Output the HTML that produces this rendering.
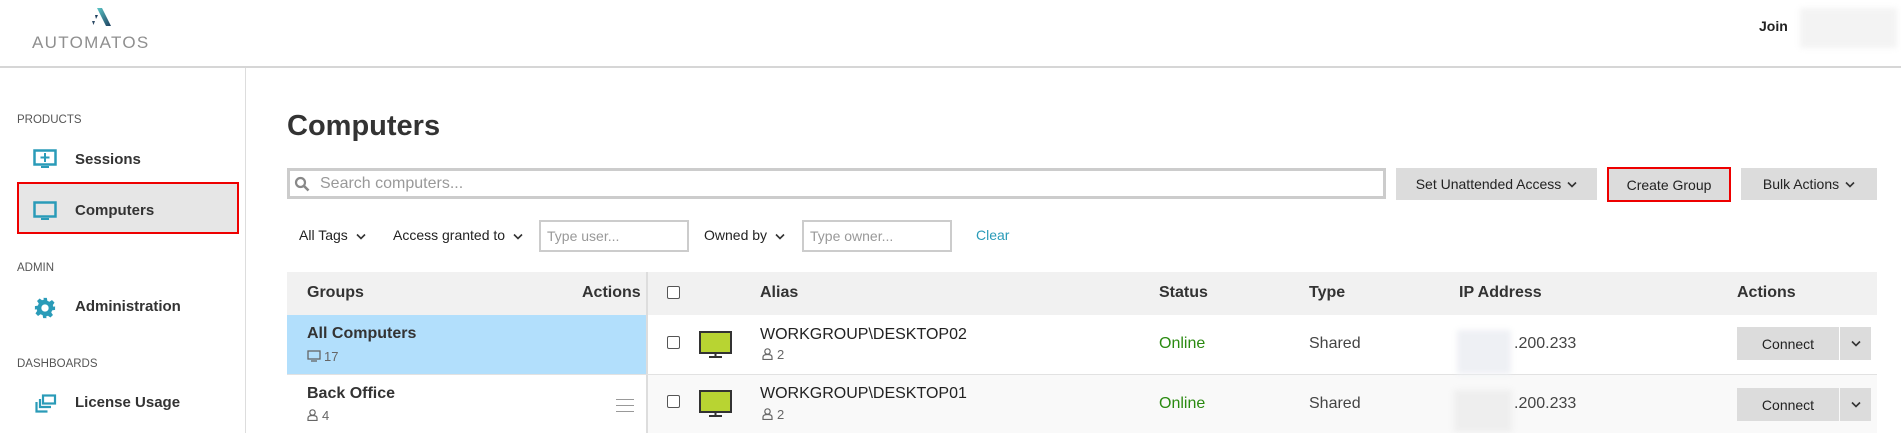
<!DOCTYPE html>
<html><head><meta charset="utf-8"><style>
*{box-sizing:border-box;margin:0;padding:0}
body{width:1901px;height:433px;overflow:hidden;background:#fff;font-family:"Liberation Sans",sans-serif;color:#222;position:relative}
.a{position:absolute;white-space:nowrap}
.btn{position:absolute;background:#dcdcdc;font-size:14px;color:#222;display:flex;align-items:center;justify-content:center}
.sec{font-size:11.5px;color:#555}
.nav{font-size:15px;font-weight:bold;color:#333}
.th{font-size:16px;font-weight:bold;color:#333}
.inp{position:absolute;border:2px solid #ccc;font-size:14px;color:#999;padding-left:6px;display:flex;align-items:center}
.cb{position:absolute;width:13px;height:13px;border:1px solid #555;border-radius:2px;background:#fff}
.chev{display:inline-block;width:10px;height:7px;margin-left:6px;vertical-align:middle}
.pi{display:inline-block;width:11px;height:12px;vertical-align:-1px;margin-right:4px}
</style></head><body>
<svg width="0" height="0" style="position:absolute"><defs>
<symbol id="ch" viewBox="0 0 10 7"><path d="M1 1.5l4 4 4-4" fill="none" stroke="#333" stroke-width="1.6"/></symbol>
<symbol id="pp" viewBox="0 0 11 12"><circle cx="5.5" cy="3.5" r="2.7" fill="none" stroke="#666" stroke-width="1.2"/><path d="M1 11.5v-2.5q0-2.5 4.5-2.5t4.5 2.5v2.5z" fill="none" stroke="#666" stroke-width="1.2"/></symbol>
</defs></svg>
<!-- header -->
<svg class="a" style="left:84px;top:7px" width="32" height="22" viewBox="0 0 32 22"><defs><linearGradient id="g" x1="0" y1="0" x2="1" y2="1"><stop offset="0" stop-color="#5cc8c8"/><stop offset="1" stop-color="#1d3f5e"/></linearGradient></defs><path d="M13 1 L18 1 L27 19 L22 19 L15.5 6 Z" fill="url(#g)"/><path d="M11 8 L14 8 L12 12 Z" fill="#1d3f5e"/><path d="M8 14 L11 14 L9.5 18 Z" fill="#2d4a66"/></svg>
<div class="a" style="left:32px;top:33px;font-size:17px;letter-spacing:1.3px;color:#8f8f8f">AUTOMATOS</div>
<div class="a" style="left:1759px;top:18px;font-size:14px;font-weight:bold;color:#222">Join</div>
<div class="a" style="left:1800px;top:8px;width:97px;height:40px;background:#f3f3f3;filter:blur(3px)"></div>
<div class="a" style="left:0;top:66px;width:1901px;height:2px;background:#d6d6d6"></div>
<!-- sidebar -->
<div class="a" style="left:245px;top:68px;width:1px;height:365px;background:#ddd"></div>
<div class="a sec" style="left:17px;top:114px">PRODUCTS</div>
<svg class="a" style="left:33px;top:149px" width="24" height="20" viewBox="0 0 24 20"><rect x="1.5" y="1.5" width="21" height="14" fill="none" stroke="#2a9bb8" stroke-width="2.5"/><path d="M12 4v9M7.5 8.5h9" stroke="#2a9bb8" stroke-width="2"/><path d="M8 18h8" stroke="#2a9bb8" stroke-width="2"/></svg>
<div class="a nav" style="left:75px;top:151px">Sessions</div>
<div class="a" style="left:17px;top:182px;width:222px;height:52px;background:#e6e6e6;border:2px solid #e00"></div>
<svg class="a" style="left:33px;top:201px" width="24" height="20" viewBox="0 0 24 20"><rect x="1.5" y="1.5" width="21" height="14" fill="none" stroke="#2a9bb8" stroke-width="2.5"/><path d="M8 18h8" stroke="#2a9bb8" stroke-width="2"/></svg>
<div class="a nav" style="left:75px;top:202px">Computers</div>
<div class="a sec" style="left:17px;top:262px">ADMIN</div>
<svg class="a" style="left:34px;top:297px" width="22" height="22" viewBox="0 0 24 24"><path fill="#2a9bb8" d="M10 1h4l.6 3.2 2.3 1 2.7-1.9 2.8 2.8-1.9 2.7 1 2.3L23 10v4l-3.2.6-1 2.3 1.9 2.7-2.8 2.8-2.7-1.9-2.3 1L14 23h-4l-.6-3.2-2.3-1-2.7 1.9-2.8-2.8 1.9-2.7-1-2.3L1 14v-4l3.2-.6 1-2.3L3.3 4.4l2.8-2.8 2.7 1.9 2.3-1zM12 8a4 4 0 100 8 4 4 0 000-8z"/></svg>
<div class="a nav" style="left:75px;top:298px">Administration</div>
<div class="a sec" style="left:17px;top:358px">DASHBOARDS</div>
<svg class="a" style="left:35px;top:394px" width="22" height="19" viewBox="0 0 22 19"><rect x="8" y="1.5" width="12" height="8" fill="none" stroke="#2a9bb8" stroke-width="2.2"/><path d="M5 5v8h11M1.5 8v9.5h11" fill="none" stroke="#2a9bb8" stroke-width="2.2"/></svg>
<div class="a nav" style="left:75px;top:394px">License Usage</div>
<!-- main -->
<div class="a" style="left:287px;top:110px;font-size:29px;font-weight:bold;color:#333">Computers</div>
<div class="inp" style="left:287px;top:168px;width:1099px;height:31px;border-width:3px;font-size:16px;padding-left:30px">Search computers...</div>
<svg class="a" style="left:294px;top:176px" width="16" height="16" viewBox="0 0 16 16"><circle cx="6.5" cy="6.5" r="4.5" fill="none" stroke="#888" stroke-width="2.2"/><path d="M10 10l4.5 4.5" stroke="#888" stroke-width="2.6"/></svg>
<div class="btn" style="left:1396px;top:168px;width:201px;height:32px">Set Unattended Access<svg class="chev"><use href="#ch"/></svg></div>
<div class="btn" style="left:1607px;top:167px;width:124px;height:35px;border:2px solid #e00">Create Group</div>
<div class="btn" style="left:1741px;top:168px;width:136px;height:32px">Bulk Actions<svg class="chev"><use href="#ch"/></svg></div>
<div class="a" style="left:299px;top:227px;font-size:14px;color:#222">All Tags<svg class="chev" style="margin-left:8px"><use href="#ch"/></svg></div>
<div class="a" style="left:393px;top:227px;font-size:14px;color:#222">Access granted to<svg class="chev" style="margin-left:8px"><use href="#ch"/></svg></div>
<div class="inp" style="left:539px;top:220px;width:150px;height:32px">Type user...</div>
<div class="a" style="left:704px;top:227px;font-size:14px;color:#222">Owned by<svg class="chev" style="margin-left:8px"><use href="#ch"/></svg></div>
<div class="inp" style="left:802px;top:220px;width:150px;height:32px">Type owner...</div>
<div class="a" style="left:976px;top:227px;font-size:14px;color:#2a9bb8">Clear</div>
<!-- table -->
<div class="a" style="left:287px;top:272px;width:1590px;height:43px;background:#f1f1f1"></div>
<div class="a" style="left:646px;top:272px;width:2px;height:161px;background:#ddd"></div>
<div class="a th" style="left:307px;top:284px">Groups</div>
<div class="a th" style="left:582px;top:284px">Actions</div>
<div class="cb" style="left:667px;top:286px"></div>
<div class="a th" style="left:760px;top:284px">Alias</div>
<div class="a th" style="left:1159px;top:284px">Status</div>
<div class="a th" style="left:1309px;top:284px">Type</div>
<div class="a th" style="left:1459px;top:284px">IP Address</div>
<div class="a th" style="left:1737px;top:284px">Actions</div>
<div class="a" style="left:287px;top:315px;width:359px;height:59px;background:#b2dffc"></div>
<div class="a" style="left:287px;top:374px;width:1590px;height:1px;background:#e2e2e2"></div>
<div class="a" style="left:648px;top:375px;width:1229px;height:58px;background:#f9f9f9"></div>
<div class="a" style="left:307px;top:325px;font-size:16px;font-weight:bold;color:#333">All Computers</div>
<div class="a" style="left:307px;top:349px;font-size:13px;color:#666"><svg width="14" height="12" viewBox="0 0 14 12" style="vertical-align:-1px;margin-right:3px"><rect x="1" y="1" width="12" height="8" fill="none" stroke="#666" stroke-width="1.3"/><path d="M4 11h6" stroke="#666" stroke-width="1.3"/></svg>17</div>
<div class="a" style="left:307px;top:385px;font-size:16px;font-weight:bold;color:#333">Back Office</div>
<div class="a" style="left:307px;top:408px;font-size:13px;color:#666"><svg class="pi"><use href="#pp"/></svg>4</div>
<div class="a" style="left:616px;top:399px;width:18px;border-top:1px solid #999;border-bottom:1px solid #999;height:13px"></div>
<div class="a" style="left:616px;top:405px;width:18px;height:1px;background:#999"></div>
<!-- rows -->
<div class="cb" style="left:667px;top:336px"></div>
<svg class="a" style="left:699px;top:331px" width="33" height="28" viewBox="0 0 33 28"><rect x="1" y="1" width="31" height="21" fill="#b8d432" stroke="#333" stroke-width="2"/><path d="M16.5 22v3M10 26h13" stroke="#333" stroke-width="2"/></svg>
<div class="a" style="left:760px;top:326px;font-size:16px;color:#222">WORKGROUP\DESKTOP02</div>
<div class="a" style="left:762px;top:347px;font-size:13px;color:#666"><svg class="pi"><use href="#pp"/></svg>2</div>
<div class="a" style="left:1159px;top:335px;font-size:16px;color:#2a8a10">Online</div>
<div class="a" style="left:1309px;top:335px;font-size:16px;color:#444">Shared</div>
<div class="a" style="left:1457px;top:330px;width:54px;height:44px;background:#eef0f4;filter:blur(3px)"></div>
<div class="a" style="left:1514px;top:335px;font-size:16px;color:#444">.200.233</div>
<div class="btn" style="left:1737px;top:327px;width:102px;height:33px">Connect</div>
<div class="btn" style="left:1840px;top:327px;width:31px;height:33px"><svg class="chev" style="margin:0"><use href="#ch"/></svg></div>
<div class="cb" style="left:667px;top:395px"></div>
<svg class="a" style="left:699px;top:390px" width="33" height="28" viewBox="0 0 33 28"><rect x="1" y="1" width="31" height="21" fill="#b8d432" stroke="#333" stroke-width="2"/><path d="M16.5 22v3M10 26h13" stroke="#333" stroke-width="2"/></svg>
<div class="a" style="left:760px;top:385px;font-size:16px;color:#222">WORKGROUP\DESKTOP01</div>
<div class="a" style="left:762px;top:407px;font-size:13px;color:#666"><svg class="pi"><use href="#pp"/></svg>2</div>
<div class="a" style="left:1159px;top:395px;font-size:16px;color:#2a8a10">Online</div>
<div class="a" style="left:1309px;top:395px;font-size:16px;color:#444">Shared</div>
<div class="a" style="left:1454px;top:390px;width:58px;height:42px;background:#eeeeee;filter:blur(3px)"></div>
<div class="a" style="left:1514px;top:395px;font-size:16px;color:#444">.200.233</div>
<div class="btn" style="left:1737px;top:388px;width:102px;height:33px">Connect</div>
<div class="btn" style="left:1840px;top:388px;width:31px;height:33px"><svg class="chev" style="margin:0"><use href="#ch"/></svg></div>
</body></html>
